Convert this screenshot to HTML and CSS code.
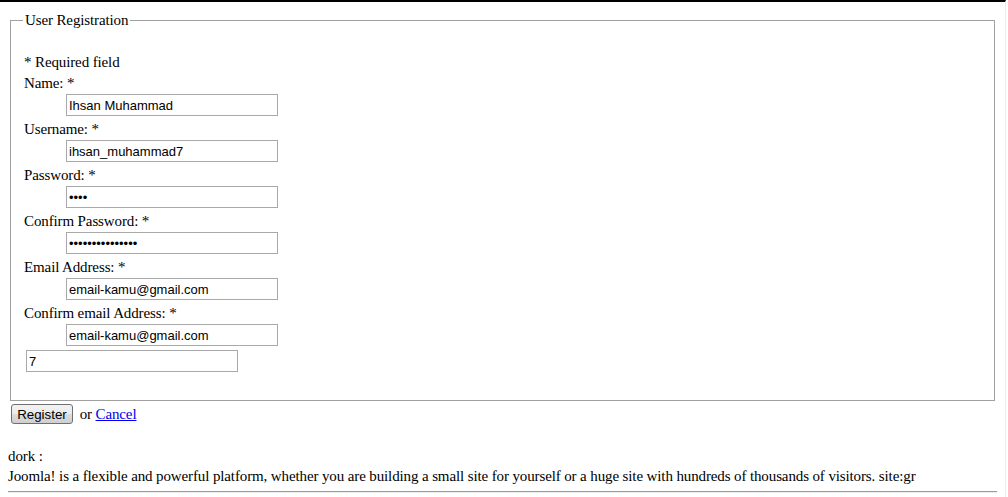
FILE: index.html
```html
<!DOCTYPE html>
<html>
<head>
<meta charset="utf-8">
<title>User Registration</title>
<link rel="stylesheet" href="styles.css">
</head>
<body>
<div class="page">
  <div class="content">
    <fieldset class="reg">
      <legend class="reg-legend">User Registration</legend>
      <div class="req">* Required field</div>
      <div class="label">Name: *</div>
      <input class="field indented" type="text" value="Ihsan Muhammad">
      <div class="label">Username: *</div>
      <input class="field indented" type="text" value="ihsan_muhammad7">
      <div class="label">Password: *</div>
      <input class="field indented" type="password" value="1234">
      <div class="label">Confirm Password: *</div>
      <input class="field indented" type="password" value="123456789012345">
      <div class="label">Email Address: *</div>
      <input class="field indented" type="text" value="email-kamu@gmail.com">
      <div class="label">Confirm email Address: *</div>
      <input class="field indented" type="text" value="email-kamu@gmail.com">
      <input class="field captcha" type="text" value="7">
    </fieldset>
    <div class="actions"><button class="btn" type="button">Register</button> or <a class="link" href="#">Cancel</a></div>
    <p class="dork">dork :<br>Joomla! is a flexible and powerful platform, whether you are building a small site for yourself or a huge site with hundreds of thousands of visitors. site:gr</p>
    <hr class="rule">
  </div>
</div>
</body>
</html>
```
FILE: styles.css
```css
html, body {
  margin: 0;
  padding: 0;
  background: #ffffff;
}
body {
  font-family: "Liberation Serif", "Times New Roman", serif;
  font-size: 15px;
  letter-spacing: -0.12px;
  color: #000000;
}
.page {
  width: 1006px;
  height: 497px;
  box-sizing: border-box;
  border-top: 2px solid #000000;
  border-right: 1px solid #ececec;
  overflow: hidden;
}
.content {
  padding: 8px 8px 0 8px;
}
.reg {
  margin: 0 2px 0 2px;
  padding: 21px 12px 28px 13px;
  border: 1px solid #a0a0a0;
  min-width: 0;
}
.reg-legend {
  padding: 0 2px;
  line-height: 20px;
  margin-left: -1px;
}
.req {
  line-height: 20px;
  height: 19px;
  padding-top: 1px;
}
.label {
  line-height: 20px;
  height: 18px;
  padding-top: 2px;
}
.field {
  display: block;
  box-sizing: border-box;
  width: 212px;
  height: 22px;
  border: 1px solid #a9a9a9;
  padding: 1px 2px;
  font-family: "Liberation Sans", Arial, sans-serif;
  font-size: 13px;
  letter-spacing: 0;
  color: #000000;
  background: #ffffff;
  outline: none;
}
.indented {
  margin: 3px 0 1px 42px;
}
.captcha {
  margin: 4px 0 0 2px;
}
.actions {
  margin-top: 3px;
  margin-left: 3px;
  line-height: 18px;
}
.btn {
  box-sizing: border-box;
  height: 20px;
  width: 62px;
  padding: 0;
  margin: 0 3px 0 0;
  font-family: "Liberation Sans", Arial, sans-serif;
  font-size: 13.33px;
  letter-spacing: 0;
  color: #000000;
  border: 1px solid #707070;
  border-radius: 3px;
  background: linear-gradient(#f2f2f2 0%, #ebebeb 50%, #dddddd 51%, #cfcfcf 100%);
}
.link {
  color: #0000ee;
  text-decoration: underline;
}
.dork {
  margin: 22px 0 0 0;
  line-height: 20px;
}
.rule {
  margin: 5px 0 0 0;
  height: 0;
  border: 0;
  border-top: 1px solid #9a9a9a;
  border-bottom: 1px solid #eeeeee;
}
```
